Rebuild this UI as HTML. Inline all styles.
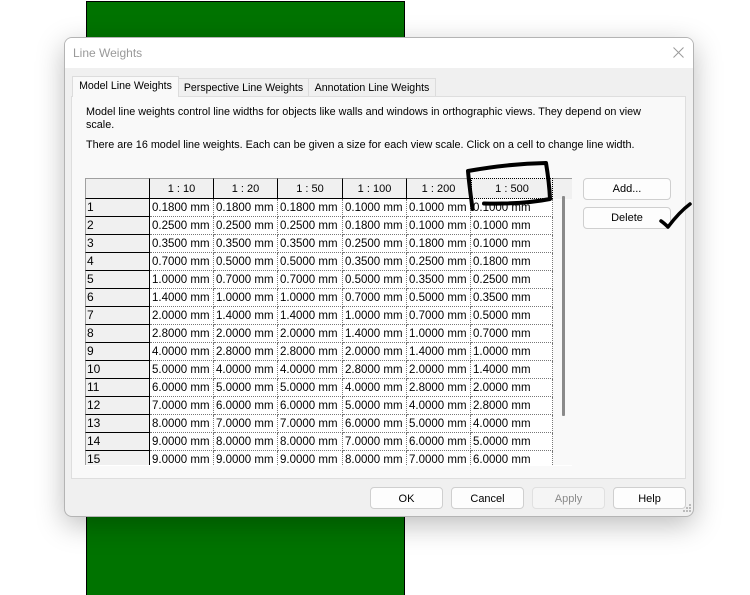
<!DOCTYPE html>
<html><head><meta charset="utf-8"><style>
html,body{margin:0;padding:0;background:#fff;}
body{width:750px;height:594px;position:relative;overflow:hidden;font-family:"Liberation Sans",sans-serif;font-size:12px;color:#000;}
.a{position:absolute;white-space:nowrap;}
#green{left:86px;top:1px;width:317px;height:593px;background:#007300;border:1px solid #000;border-bottom:0;}
#dlg{left:64px;top:37px;width:628px;height:478px;background:#f0f0f0;border:1px solid #b4b4b4;border-radius:8px;box-shadow:0 8px 28px rgba(0,0,0,.26);overflow:hidden;}
#tb{left:0;top:0;width:628px;height:30px;background:#fff;}
.tab{background:#f0f0f0;border:1px solid #dcdcdc;border-bottom:0;box-sizing:border-box;text-align:center;font-size:10.6px;}
#panel{left:6px;top:58px;width:615px;height:383px;box-sizing:border-box;background:#f9f9f9;border:1px solid #dedede;}
.btn{box-sizing:border-box;background:#fdfdfd;border:1px solid #cfcfcf;border-radius:4px;text-align:center;line-height:20px;height:22px;font-size:11px;}
.b2{line-height:22px;}
.d{font-size:10.8px;}
#grid{left:85px;top:178px;width:487px;height:288px;overflow:hidden;background:#f9f9f9;border-bottom:1px solid #fff;box-sizing:border-box;}
#gh{left:0;top:0;width:487px;height:21px;background:#f0f0f0;border-top:1px solid #a0a0a0;box-sizing:border-box;}
table{position:absolute;left:0;top:0;border-collapse:separate;border-spacing:0;table-layout:fixed;width:468px;font-size:11.5px;}
th,td{box-sizing:border-box;padding:0;white-space:nowrap;overflow:hidden;font-weight:normal;}
th{height:21px;background:#f0f0f0;border-top:1px solid #a0a0a0;border-right:1px solid #000;border-bottom:1px solid #000;text-align:center;padding-top:1px;font-size:11px;}
th.f{border-left:1px solid #a0a0a0;}
th.s{border:1px dotted #000;}
td{height:18px;background:#fff;border-right:1px dotted #777;border-bottom:1px dotted #777;padding-left:2px;}
td.h{background:#f0f0f0;border-left:1px solid #a0a0a0;border-right:1px solid #000;border-bottom:1px solid #000;padding-left:1px;padding-bottom:2px;font-size:12px;}
</style></head><body>
<div class="a" id="green"></div>
<div class="a" id="dlg">
<div class="a" id="tb"></div>
<div class="a" style="left:8px;top:8px;font-size:12px;color:#999;">Line Weights</div>
<svg class="a" style="left:607px;top:8px" width="13" height="13"><path d="M1.500 1.500L11.500 11.500M11.500 1.500L1.500 11.500" stroke="#9a9a9a" stroke-width="1" fill="none"/></svg>
<div class="a tab" style="left:113px;top:40px;width:131px;height:19px;line-height:19px;">Perspective Line Weights</div>
<div class="a tab" style="left:243px;top:40px;width:128px;height:19px;line-height:19px;">Annotation Line Weights</div>
<div class="a" id="panel"></div>
<div class="a tab" style="left:7px;top:38px;width:107px;height:21px;line-height:18px;background:#f9f9f9;">Model Line Weights</div>
<svg class="a" style="left:614px;top:464px" width="14" height="14"><g fill="#bbb"><rect x="10" y="2" width="2" height="2"/><rect x="7" y="5" width="2" height="2"/><rect x="10" y="5" width="2" height="2"/><rect x="4" y="8" width="2" height="2"/><rect x="7" y="8" width="2" height="2"/><rect x="10" y="8" width="2" height="2"/></g></svg>
</div>
<div class="a d" style="left:86px;top:106px;">Model line weights control line widths for objects like walls and windows in orthographic views. They depend on view</div>
<div class="a d" style="left:86px;top:119px;">scale.</div>
<div class="a d" style="left:86px;top:139px;">There are 16 model line weights. Each can be given a size for each view scale. Click on a cell to change line width.</div>
<div class="a" id="grid">
<div class="a" id="gh"></div>
<table>
<colgroup><col style="width:65px"><col style="width:64px"><col style="width:64px"><col style="width:65px"><col style="width:64px"><col style="width:64px"><col style="width:82px"></colgroup>
<tr><th class="f"></th><th>1 : 10</th><th>1 : 20</th><th>1 : 50</th><th>1 : 100</th><th>1 : 200</th><th class="s">1 : 500</th></tr>
<tr><td class="h">1</td><td>0.1800 mm</td><td>0.1800 mm</td><td>0.1800 mm</td><td>0.1000 mm</td><td>0.1000 mm</td><td>0.1000 mm</td></tr>
<tr><td class="h">2</td><td>0.2500 mm</td><td>0.2500 mm</td><td>0.2500 mm</td><td>0.1800 mm</td><td>0.1000 mm</td><td>0.1000 mm</td></tr>
<tr><td class="h">3</td><td>0.3500 mm</td><td>0.3500 mm</td><td>0.3500 mm</td><td>0.2500 mm</td><td>0.1800 mm</td><td>0.1000 mm</td></tr>
<tr><td class="h">4</td><td>0.7000 mm</td><td>0.5000 mm</td><td>0.5000 mm</td><td>0.3500 mm</td><td>0.2500 mm</td><td>0.1800 mm</td></tr>
<tr><td class="h">5</td><td>1.0000 mm</td><td>0.7000 mm</td><td>0.7000 mm</td><td>0.5000 mm</td><td>0.3500 mm</td><td>0.2500 mm</td></tr>
<tr><td class="h">6</td><td>1.4000 mm</td><td>1.0000 mm</td><td>1.0000 mm</td><td>0.7000 mm</td><td>0.5000 mm</td><td>0.3500 mm</td></tr>
<tr><td class="h">7</td><td>2.0000 mm</td><td>1.4000 mm</td><td>1.4000 mm</td><td>1.0000 mm</td><td>0.7000 mm</td><td>0.5000 mm</td></tr>
<tr><td class="h">8</td><td>2.8000 mm</td><td>2.0000 mm</td><td>2.0000 mm</td><td>1.4000 mm</td><td>1.0000 mm</td><td>0.7000 mm</td></tr>
<tr><td class="h">9</td><td>4.0000 mm</td><td>2.8000 mm</td><td>2.8000 mm</td><td>2.0000 mm</td><td>1.4000 mm</td><td>1.0000 mm</td></tr>
<tr><td class="h">10</td><td>5.0000 mm</td><td>4.0000 mm</td><td>4.0000 mm</td><td>2.8000 mm</td><td>2.0000 mm</td><td>1.4000 mm</td></tr>
<tr><td class="h">11</td><td>6.0000 mm</td><td>5.0000 mm</td><td>5.0000 mm</td><td>4.0000 mm</td><td>2.8000 mm</td><td>2.0000 mm</td></tr>
<tr><td class="h">12</td><td>7.0000 mm</td><td>6.0000 mm</td><td>6.0000 mm</td><td>5.0000 mm</td><td>4.0000 mm</td><td>2.8000 mm</td></tr>
<tr><td class="h">13</td><td>8.0000 mm</td><td>7.0000 mm</td><td>7.0000 mm</td><td>6.0000 mm</td><td>5.0000 mm</td><td>4.0000 mm</td></tr>
<tr><td class="h">14</td><td>9.0000 mm</td><td>8.0000 mm</td><td>8.0000 mm</td><td>7.0000 mm</td><td>6.0000 mm</td><td>5.0000 mm</td></tr>
<tr><td class="h">15</td><td>9.0000 mm</td><td>9.0000 mm</td><td>9.0000 mm</td><td>8.0000 mm</td><td>7.0000 mm</td><td>6.0000 mm</td></tr>
</table>
<div class="a" style="left:477px;top:18px;width:3px;height:220px;background:#8a8a8a;border-radius:1px;"></div>
</div>
<div class="a btn" style="left:583px;top:178px;width:88px;">Add...</div>
<div class="a btn" style="left:583px;top:207px;width:88px;">Delete</div>
<div class="a btn b2" style="left:370px;top:487px;width:73px;">OK</div>
<div class="a btn b2" style="left:451px;top:487px;width:73px;">Cancel</div>
<div class="a btn b2" style="left:532px;top:487px;width:73px;background:#f5f5f5;border-color:#e0e0e0;color:#8a8a8a;">Apply</div>
<div class="a btn b2" style="left:613px;top:487px;width:73px;">Help</div>
<svg class="a" style="left:0;top:0" width="750" height="594"><path d="M472.500 209C471 197 469 183 468 171C490 167 520 163.500 546 163C548 175 549.500 188 550 199C530 203 505 204 484 203.500" fill="none" stroke="#000" stroke-width="4" stroke-linecap="round" stroke-linejoin="round"/><path d="M661 221C664 223 666 225 668 227C674 219 682 210 690 204" fill="none" stroke="#000" stroke-width="3.500" stroke-linecap="round" stroke-linejoin="round"/></svg>
</body></html>
